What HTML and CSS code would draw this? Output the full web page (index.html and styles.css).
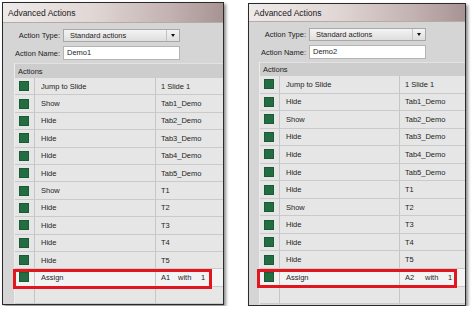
FILE: index.html
```html
<!DOCTYPE html>
<html>
<head>
<meta charset="utf-8">
<link rel="stylesheet" href="styles.css">
</head>
<body>
<div class="page">
  <div class="panel p1">
    <div class="title">Advanced Actions</div>
    <div class="form">
      <div class="field-row"><span class="label">Action Type:</span><div class="select"><span class="sel-text">Standard actions</span><span class="sel-btn"><span class="tri"></span></span></div></div>
      <div class="field-row"><span class="label">Action Name:</span><div class="input">Demo1</div></div>
    </div>
    <div class="list">
      <div class="head">Actions</div>
      <div class="row"><span class="c1"><i class="sq"></i></span><span class="c2">Jump to Slide</span><span class="c3">1 Slide 1</span></div>
      <div class="row"><span class="c1"><i class="sq"></i></span><span class="c2">Show</span><span class="c3">Tab1_Demo</span></div>
      <div class="row"><span class="c1"><i class="sq"></i></span><span class="c2">Hide</span><span class="c3">Tab2_Demo</span></div>
      <div class="row"><span class="c1"><i class="sq"></i></span><span class="c2">Hide</span><span class="c3">Tab3_Demo</span></div>
      <div class="row"><span class="c1"><i class="sq"></i></span><span class="c2">Hide</span><span class="c3">Tab4_Demo</span></div>
      <div class="row"><span class="c1"><i class="sq"></i></span><span class="c2">Hide</span><span class="c3">Tab5_Demo</span></div>
      <div class="row"><span class="c1"><i class="sq"></i></span><span class="c2">Show</span><span class="c3">T1</span></div>
      <div class="row"><span class="c1"><i class="sq"></i></span><span class="c2">Hide</span><span class="c3">T2</span></div>
      <div class="row"><span class="c1"><i class="sq"></i></span><span class="c2">Hide</span><span class="c3">T3</span></div>
      <div class="row"><span class="c1"><i class="sq"></i></span><span class="c2">Hide</span><span class="c3">T4</span></div>
      <div class="row"><span class="c1"><i class="sq"></i></span><span class="c2">Hide</span><span class="c3">T5</span></div>
      <div class="row sel"><span class="c1"><i class="sq"></i></span><span class="c2">Assign</span><span class="c3"><span class="v1">A1</span><span class="v2">with</span><span>1</span></span></div>
      <div class="row"><span class="c1"></span><span class="c2"></span><span class="c3"></span></div>
    </div>
    <div class="hl"></div>
  </div>

  <div class="panel p2">
    <div class="title">Advanced Actions</div>
    <div class="form">
      <div class="field-row"><span class="label">Action Type:</span><div class="select"><span class="sel-text">Standard actions</span><span class="sel-btn"><span class="tri"></span></span></div></div>
      <div class="field-row"><span class="label">Action Name:</span><div class="input">Demo2</div></div>
    </div>
    <div class="list">
      <div class="head">Actions</div>
      <div class="row"><span class="c1"><i class="sq"></i></span><span class="c2">Jump to Slide</span><span class="c3">1 Slide 1</span></div>
      <div class="row"><span class="c1"><i class="sq"></i></span><span class="c2">Hide</span><span class="c3">Tab1_Demo</span></div>
      <div class="row"><span class="c1"><i class="sq"></i></span><span class="c2">Show</span><span class="c3">Tab2_Demo</span></div>
      <div class="row"><span class="c1"><i class="sq"></i></span><span class="c2">Hide</span><span class="c3">Tab3_Demo</span></div>
      <div class="row"><span class="c1"><i class="sq"></i></span><span class="c2">Hide</span><span class="c3">Tab4_Demo</span></div>
      <div class="row"><span class="c1"><i class="sq"></i></span><span class="c2">Hide</span><span class="c3">Tab5_Demo</span></div>
      <div class="row"><span class="c1"><i class="sq"></i></span><span class="c2">Hide</span><span class="c3">T1</span></div>
      <div class="row"><span class="c1"><i class="sq"></i></span><span class="c2">Show</span><span class="c3">T2</span></div>
      <div class="row"><span class="c1"><i class="sq"></i></span><span class="c2">Hide</span><span class="c3">T3</span></div>
      <div class="row"><span class="c1"><i class="sq"></i></span><span class="c2">Hide</span><span class="c3">T4</span></div>
      <div class="row"><span class="c1"><i class="sq"></i></span><span class="c2">Hide</span><span class="c3">T5</span></div>
      <div class="row sel"><span class="c1"><i class="sq"></i></span><span class="c2">Assign</span><span class="c3"><span class="v1">A2</span><span class="v2">with</span><span>1</span></span></div>
      <div class="row"><span class="c1"></span><span class="c2"></span><span class="c3"></span></div>
    </div>
    <div class="hl"></div>
  </div>
</div>
</body>
</html>
```

FILE: styles.css
```css
* { box-sizing: border-box; }

body {
  margin: 0;
  background: #ffffff;
  font-family: "Liberation Sans", Arial, sans-serif;
  font-size: 7.5px;
  color: #1e1e1e;
}

.page {
  display: flex;
  align-items: flex-start;
  gap: 24px;
  padding: 2px 0 0 2px;
}

.panel {
  position: relative;
  display: flex;
  flex-direction: column;
  height: 303px;
  overflow: hidden;
  background: #d5d5d5;
  border: 1px solid #2a2a2a;
  box-shadow: 2px 2px 3px rgba(0, 0, 0, 0.45);
  --title-h: 20px;
  --head-h: 15px;
  --c2: 121px;
  --list-ml: 11px;
  --row-h: 17.4px;
}

.p1 { width: 222px; }
.p2 {
  width: 218px;
  margin-top: 1px;
  --title-h: 18px;
  --head-h: 14px;
  --c2: 120px;
  --list-ml: 10px;
  --row-h: 17.55px;
}

.title {
  height: var(--title-h);
  line-height: var(--title-h);
  padding-left: 5px;
  font-size: 8.5px;
  color: #1a1a1a;
  background: linear-gradient(90deg, #eeeae9 0%, #e1d8d6 40%, #c3b3b2 75%, #a89393 100%);
  border-bottom: 1px solid #b7aaa9;
}

.form {
  display: flex;
  flex-direction: column;
  gap: 4px;
  padding-top: 6px;
}

.field-row {
  display: flex;
  align-items: center;
  gap: 3px;
}

.label {
  width: 57px;
  text-align: right;
  color: #222;
}

.select {
  display: flex;
  align-items: stretch;
  width: 117px;
  height: 13px;
  border: 1px solid #a8a8a8;
  background: linear-gradient(#f4f4f4, #dedede);
}

.sel-text {
  flex: 1;
  padding-left: 6px;
  line-height: 11px;
}

.sel-btn {
  width: 13px;
  display: flex;
  align-items: center;
  justify-content: center;
  border-left: 1px solid #c4c4c4;
}

.tri {
  width: 0;
  height: 0;
  border-left: 2.5px solid transparent;
  border-right: 2.5px solid transparent;
  border-top: 3px solid #111;
}

.input {
  width: 117px;
  height: 14px;
  line-height: 12px;
  padding-left: 3px;
  background: #ffffff;
  border: 1px solid #b4b4b4;
}

.list {
  margin-top: 3px;
  margin-left: var(--list-ml);
  border-left: 1px solid #ececec;
  flex: 1;
}

.head {
  height: var(--head-h);
  line-height: var(--head-h);
  padding-left: 3px;
  background: #cdcdcd;
  border-top: 1px solid #e2e2e2;
  color: #222;
}

.row {
  display: grid;
  grid-template-columns: 20px var(--c2) 1fr;
  height: var(--row-h);
  background: #e6e6e6;
  border-bottom: 1px solid #cacaca;
}

.row.sel { background: #f3f3f3; }

.row > span {
  display: flex;
  align-items: center;
  border-right: 1px solid #c6c6c6;
}

.row > span.c3 { border-right: none; }

.c1 { padding-left: 4px; }
.c2 { padding-left: 6px; }
.c3 { padding-left: 5px; }

.sq {
  display: block;
  width: 10px;
  height: 10px;
  background: #226d41;
  border: 1px solid #1b5a34;
}

.v1 { display: inline-block; width: 17px; }
.v2 { display: inline-block; width: 23px; }
.p2 .v1 { width: 20px; }

.hl {
  position: absolute;
  left: 10px;
  top: 266px;
  width: 199px;
  height: 20px;
  border: 3px solid #e2161e;
}

.p2 .hl {
  left: 8px;
  top: 265px;
  width: 200px;
  height: 19px;
}
```
